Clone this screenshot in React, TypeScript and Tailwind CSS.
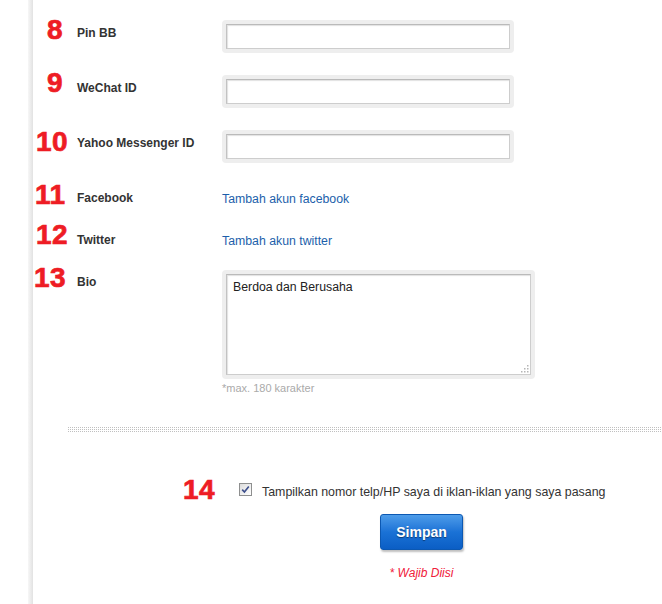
import React from "react";

type Row = {
  num: string;
  numCls: string;
  label: string;
  labelCls: string;
  rowCls: string;
  kind: "input" | "link";
  fieldCls: string;
  link?: string;
};

const rows: Row[] = [
  { num: "8", numCls: "mt-0 pl-[14px]", label: "Pin BB", labelCls: "mt-[10px]", rowCls: "h-[55px]", kind: "input", fieldCls: "mt-[4px]" },
  { num: "9", numCls: "mt-[-2px] pl-[14px]", label: "WeChat ID", labelCls: "mt-[10px]", rowCls: "h-[55px]", kind: "input", fieldCls: "mt-[4px]" },
  { num: "10", numCls: "mt-[2px] pl-[3px]", label: "Yahoo Messenger ID", labelCls: "mt-[10px]", rowCls: "h-[54px]", kind: "input", fieldCls: "mt-[4px]" },
  { num: "11", numCls: "mt-[1px] pl-[2px]", label: "Facebook", labelCls: "mt-[11px]", rowCls: "h-[42px]", kind: "link", fieldCls: "mt-[6px]", link: "Tambah akun facebook" },
  { num: "12", numCls: "mt-[-1px] pl-[3px]", label: "Twitter", labelCls: "mt-[11px]", rowCls: "h-[42px]", kind: "link", fieldCls: "mt-[6px]", link: "Tambah akun twitter" },
];

function Num({ children, className }: { children: React.ReactNode; className: string }) {
  return (
    <div className={"text-[28px] leading-[28px] font-bold text-[#ee1c24] [-webkit-text-stroke:0.7px_#ee1c24] tracking-[0.5px] " + className}>{children}</div>
  );
}

function TextBox() {
  return (
    <div className="w-[292px] h-[33px] p-[4px] bg-[#eeeeee] rounded-[4px]">
      <input
        type="text"
        className="block w-full h-full bg-white border border-[#cdcdcd] border-t-[#bababa] border-l-[#c2c2c2] shadow-[inset_1px_1px_1px_#e2e2e2] outline-none"
      />
    </div>
  );
}

export default function App() {
  return (
    <div className="w-[662px] h-[604px] bg-white flex overflow-hidden font-['Liberation_Sans',Arial,sans-serif] text-[#333]">
      <div className="w-[28px] shrink-0 bg-white" />
      <div className="w-[5px] shrink-0 bg-gradient-to-r from-[#f7f7f7] to-[#e2e2e2]" />
      <div className="flex-1 flex flex-col pt-[16px]">
        {rows.map((r) => (
          <div key={r.num} className={"flex items-start " + r.rowCls}>
            <Num className={"w-[40px] shrink-0 " + r.numCls}>{r.num}</Num>
            <div className={"ml-[4px] w-[145px] shrink-0 text-[12px] leading-[14px] font-bold text-[#333] " + r.labelCls}>
              {r.label}
            </div>
            <div className={r.fieldCls}>
              {r.kind === "input" ? (
                <TextBox />
              ) : (
                <a className="text-[12.3px] leading-[14px] text-[#1c5fab] cursor-pointer">{r.link}</a>
              )}
            </div>
          </div>
        ))}

        {/* Bio row */}
        <div className="flex items-start">
          <Num className="w-[40px] shrink-0 mt-0 pl-[1px]">13</Num>
          <div className="ml-[4px] w-[145px] shrink-0 mt-[11px] text-[12px] leading-[14px] font-bold text-[#333]">Bio</div>
          <div className="mt-[6px] flex flex-col">
            <div className="w-[313px] h-[109px] p-[4px] bg-[#eeeeee] rounded-[4px]">
              <div className="relative w-full h-full bg-white border border-[#cdcdcd] border-t-[#bababa] border-l-[#c2c2c2] shadow-[inset_1px_1px_1px_#e2e2e2]">
                <div className="pl-[6px] pt-[5px] text-[12.3px] leading-[14px] text-[#222]">Berdoa dan Berusaha</div>
                <svg className="absolute right-[1px] bottom-[1px]" width="10" height="10" viewBox="0 0 10 10">
                  <rect x="8" y="2" width="1.5" height="1.5" fill="#b5b5b5" />
                  <rect x="8" y="5" width="1.5" height="1.5" fill="#b5b5b5" />
                  <rect x="5" y="5" width="1.5" height="1.5" fill="#b5b5b5" />
                  <rect x="8" y="8" width="1.5" height="1.5" fill="#b5b5b5" />
                  <rect x="5" y="8" width="1.5" height="1.5" fill="#b5b5b5" />
                  <rect x="2" y="8" width="1.5" height="1.5" fill="#b5b5b5" />
                </svg>
              </div>
            </div>
            <div className="mt-[3px] text-[11px] leading-[13px] text-[#aaaaaa]">*max. 180 karakter</div>
          </div>
        </div>

        {/* Dotted separator */}
        <div className="mt-[32px] ml-[35px] h-[5px] bg-[conic-gradient(from_270deg_at_1px_1px,#c0c0c0_90deg,transparent_0)] bg-[length:2px_2px]" />

        {/* Checkbox row */}
        <div className="mt-[44px] ml-[150px] flex items-start">
          <Num className="w-[56px] shrink-0">14</Num>
          <div className="mt-[7px] w-[13px] h-[13px] shrink-0 border border-[#8e8f8f] bg-gradient-to-br from-[#dcdcdc] to-[#ffffff] flex items-center justify-center">
            <svg width="9" height="9" viewBox="0 0 9 9">
              <path d="M1.2 4.6 L3.4 7 L7.8 1.4" fill="none" stroke="#3d4f8c" strokeWidth="1.6" />
            </svg>
          </div>
          <div className="ml-[10px] mt-[9px] text-[12.4px] leading-[14px] text-[#333] whitespace-nowrap">
            Tampilkan nomor telp/HP saya di iklan-iklan yang saya pasang
          </div>
        </div>

        {/* Button + note */}
        <div className="mt-[10px] ml-[347px] w-[83px] flex flex-col items-center">
          <button className="w-[83px] h-[36px] rounded-[3px] border border-[#0c58b2] bg-gradient-to-b from-[#4d9ce9] via-[#1a72d6] to-[#0b5ec5] shadow-[1px_2px_2px_rgba(0,0,0,0.25)] text-white text-[14px] font-bold [text-shadow:0_1px_1px_rgba(0,0,0,0.45)]">
            Simpan
          </button>
          <div className="mt-[16px] text-[12px] leading-[14px] italic text-[#f0203a] whitespace-nowrap">* Wajib Diisi</div>
        </div>
      </div>
    </div>
  );
}
